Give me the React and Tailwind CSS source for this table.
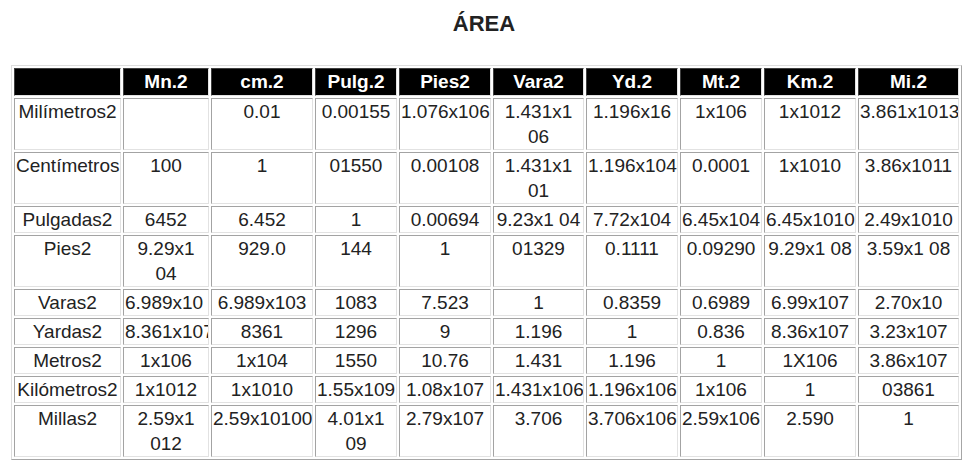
const headers = [
  { label: "", w: "w-[107px]" },
  { label: "Mn.2", w: "w-[86px]" },
  { label: "cm.2", w: "w-[102px]" },
  { label: "Pulg.2", w: "w-[82px]" },
  { label: "Pies2", w: "w-[92px]" },
  { label: "Vara2", w: "w-[91px]" },
  { label: "Yd.2", w: "w-[92px]" },
  { label: "Mt.2", w: "w-[82px]" },
  { label: "Km.2", w: "w-[92px]" },
  { label: "Mi.2", w: "w-[101px]" },
];

// "|" marks a forced line break, "<" a cell that starts at the left edge
const rows = [
  ["Milímetros2", "", "0.01", "0.00155", "1.076x106", "1.431x1|06", "1.196x16", "1x106", "1x1012", "3.861x1013"],
  ["Centímetros", "100", "1", "01550", "0.00108", "1.431x1|01", "1.196x104", "0.0001", "1x1010", "3.86x1011"],
  ["Pulgadas2", "6452", "6.452", "1", "0.00694", "9.23x1 04", "7.72x104", "6.45x104", "6.45x1010", "2.49x1010"],
  ["Pies2", "9.29x1|04", "929.0", "144", "1", "01329", "0.1111", "0.09290", "9.29x1 08", "3.59x1 08"],
  ["Varas2", "<6.989x10", "6.989x103", "1083", "7.523", "1", "0.8359", "0.6989", "6.99x107", "2.70x10"],
  ["Yardas2", "8.361x107", "8361", "1296", "9", "1.196", "1", "0.836", "8.36x107", "3.23x107"],
  ["Metros2", "1x106", "1x104", "1550", "10.76", "1.431", "1.196", "1", "1X106", "3.86x107"],
  ["Kilómetros2", "1x1012", "1x1010", "1.55x109", "1.08x107", "1.431x106", "1.196x106", "1x106", "1", "03861"],
  ["Millas2", "2.59x1|012", "2.59x10100", "4.01x1|09", "2.79x107", "3.706", "3.706x106", "2.59x106", "2.590", "1"],
];

function Cell({ value }) {
  const left = value.startsWith("<");
  const text = left ? value.slice(1) : value;
  const lines = text.split("|");
  return (
    <td
      className={`border border-t-[#a3a3a3] border-l-[#a3a3a3] border-r-[#e2e2e2] border-b-[#e2e2e2] px-[1px] py-0 align-top leading-[25px] whitespace-nowrap overflow-hidden ${
        left ? "text-left" : "text-center"
      }`}
    >
      {lines.map((line, i) => (
        <div key={i}>{line || "\u00a0"}</div>
      ))}
    </td>
  );
}

export default function App() {
  return (
    <div className="min-h-screen bg-white text-[#222] font-['Liberation_Sans',Arial,sans-serif] text-[19px]">
      <div className="w-[968px] pt-[11px] text-center font-bold text-[22px] leading-[25px] text-[#222]">
        ÁREA
      </div>

      <table className="ml-[11px] mt-[29px] w-[951px] table-fixed border-separate border-spacing-[2px] border border-t-[#dddddd] border-l-[#dddddd] border-r-[#a6a6a6] border-b-[#a6a6a6]">
        <thead>
          <tr>
            {headers.map((h, i) => (
              <th
                key={i}
                className={`${h.w} bg-black text-white font-bold text-center align-middle leading-[26px] px-[1px] py-0 border border-t-[#404040] border-l-[#404040] border-r-[#e2e2e2] border-b-[#e2e2e2]`}
              >
                {h.label}
              </th>
            ))}
          </tr>
        </thead>
        <tbody>
          {rows.map((row, r) => (
            <tr key={r}>
              {row.map((v, c) => (
                <Cell key={c} value={v} />
              ))}
            </tr>
          ))}
        </tbody>
      </table>
    </div>
  );
}
